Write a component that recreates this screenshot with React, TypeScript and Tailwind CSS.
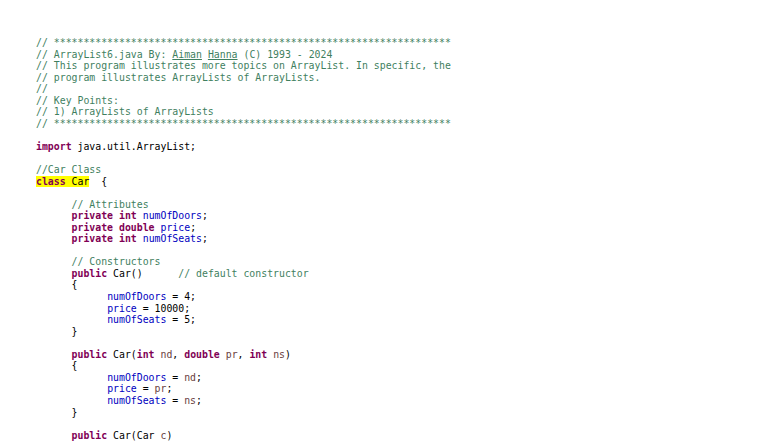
import React from "react";

type Seg = { t: string; c?: "k" | "c" | "f" | "p" | "u" | "h" };

const C = (t: string): Seg => ({ t, c: "c" });
const K = (t: string): Seg => ({ t, c: "k" });
const F = (t: string): Seg => ({ t, c: "f" });
const P = (t: string): Seg => ({ t, c: "p" });
const T = (t: string): Seg => ({ t });

const stars = "// " + "*".repeat(67);
const I1 = "      ";
const I2 = "            ";

const lines: Seg[][] = [
  [C(stars)],
  [C("// ArrayList6.java By: "), { t: "Aiman", c: "u" }, C(" "), { t: "Hanna", c: "u" }, C(" (C) 1993 - 2024")],
  [C("// This program illustrates more topics on ArrayList. In specific, the")],
  [C("// program illustrates ArrayLists of ArrayLists.")],
  [C("//")],
  [C("// Key Points:")],
  [C("// 1) ArrayLists of ArrayLists")],
  [C(stars)],
  [],
  [K("import"), T(" java.util.ArrayList;")],
  [],
  [C("//Car Class")],
  [{ t: "class Car", c: "h" }, T("  {")],
  [],
  [T(I1), C("// Attributes")],
  [T(I1), K("private int"), T(" "), F("numOfDoors"), T(";")],
  [T(I1), K("private double"), T(" "), F("price"), T(";")],
  [T(I1), K("private int"), T(" "), F("numOfSeats"), T(";")],
  [],
  [T(I1), C("// Constructors")],
  [T(I1), K("public"), T(" Car()      "), C("// default constructor")],
  [T(I1 + "{")],
  [T(I2), F("numOfDoors"), T(" = 4;")],
  [T(I2), F("price"), T(" = 10000;")],
  [T(I2), F("numOfSeats"), T(" = 5;")],
  [T(I1 + "}")],
  [],
  [T(I1), K("public"), T(" Car("), K("int"), T(" "), P("nd"), T(", "), K("double"), T(" "), P("pr"), T(", "), K("int"), T(" "), P("ns"), T(")")],
  [T(I1 + "{")],
  [T(I2), F("numOfDoors"), T(" = "), P("nd"), T(";")],
  [T(I2), F("price"), T(" = "), P("pr"), T(";")],
  [T(I2), F("numOfSeats"), T(" = "), P("ns"), T(";")],
  [T(I1 + "}")],
  [],
  [T(I1), K("public"), T(" Car(Car "), P("c"), T(")")],
];

function Span({ s }: { s: Seg }) {
  switch (s.c) {
    case "c":
      return <span className="text-[#3f7f5f]">{s.t}</span>;
    case "u":
      return <span className="text-[#3f7f5f] underline decoration-[#3f7f5f] underline-offset-[1px]">{s.t}</span>;
    case "k":
      return <span className="text-[#7f0055] font-bold">{s.t}</span>;
    case "f":
      return <span className="text-[#0000c0]">{s.t}</span>;
    case "p":
      return <span className="text-[#6a3e3e]">{s.t}</span>;
    case "h":
      return (
        <span className="bg-[#ffff00] text-[#7f0055] font-bold">
          <span>class</span>
          <span className="font-normal text-black"> Car</span>
        </span>
      );
    default:
      return <span>{s.t}</span>;
  }
}

export default function App() {
  return (
    <div className="w-[784px] h-[441px] overflow-hidden bg-white pl-[36px] pt-[37px]">
      <div
        className="whitespace-pre text-black text-[9.85px] leading-[11.56px]"
        style={{ fontFamily: '"DejaVu Sans Mono", monospace' }}
      >
        {lines.map((l, i) => (
          <div key={i} className="h-[11.56px]">
            {l.map((s, j) => (
              <Span key={j} s={s} />
            ))}
          </div>
        ))}
      </div>
    </div>
  );
}
